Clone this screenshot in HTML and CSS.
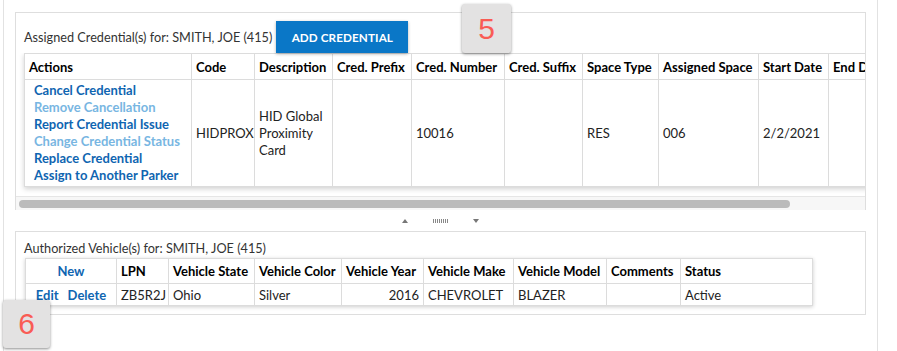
FILE: index.html
```html
<!DOCTYPE html>
<html>
<head>
<meta charset="utf-8">
<link rel="stylesheet" href="styles.css">
</head>
<body>
<div class="frame">
  <section class="panel panel-cred">
    <div class="panel-head">
      <span class="panel-title">Assigned Credential(s) for: SMITH, JOE (415)</span>
      <button class="btn-primary">ADD CREDENTIAL</button>
    </div>
    <div class="scroll-wrap">
      <div class="scroll-clip">
        <table class="grid grid-cred">
          <colgroup>
            <col class="c-actions"><col class="c-code"><col class="c-desc"><col class="c-prefix"><col class="c-number"><col class="c-suffix"><col class="c-stype"><col class="c-aspace"><col class="c-start"><col class="c-end">
          </colgroup>
          <thead>
            <tr>
              <th>Actions</th><th>Code</th><th>Description</th><th>Cred. Prefix</th><th>Cred. Number</th><th>Cred. Suffix</th><th>Space Type</th><th>Assigned Space</th><th>Start Date</th><th>End Date</th>
            </tr>
          </thead>
          <tbody>
            <tr>
              <td class="actions">
                <a class="lnk">Cancel Credential</a>
                <a class="lnk lnk-dim">Remove Cancellation</a>
                <a class="lnk">Report Credential Issue</a>
                <a class="lnk lnk-dim">Change Credential Status</a>
                <a class="lnk">Replace Credential</a>
                <a class="lnk">Assign to Another Parker</a>
              </td>
              <td>HIDPROX</td>
              <td>HID Global Proximity Card</td>
              <td></td>
              <td>10016</td>
              <td></td>
              <td>RES</td>
              <td>006</td>
              <td>2/2/2021</td>
              <td></td>
            </tr>
          </tbody>
        </table>
      </div>
      <div class="hscroll"><div class="hthumb"></div></div>
    </div>
  </section>

  <div class="splitter">
    <span class="tri-up"></span>
    <span class="grip"></span>
    <span class="tri-down"></span>
  </div>

  <section class="panel panel-veh">
    <div class="panel-title veh-title">Authorized Vehicle(s) for: SMITH, JOE (415)</div>
    <table class="grid grid-veh">
      <colgroup>
        <col class="v-act"><col class="v-lpn"><col class="v-state"><col class="v-color"><col class="v-year"><col class="v-make"><col class="v-model"><col class="v-comm"><col class="v-status">
      </colgroup>
      <thead>
        <tr>
          <th class="center"><a class="lnk">New</a></th><th>LPN</th><th>Vehicle State</th><th>Vehicle Color</th><th>Vehicle Year</th><th>Vehicle Make</th><th>Vehicle Model</th><th>Comments</th><th>Status</th>
        </tr>
      </thead>
      <tbody>
        <tr>
          <td class="center"><a class="lnk">Edit</a><a class="lnk gap">Delete</a></td>
          <td>ZB5R2J</td><td>Ohio</td><td>Silver</td><td class="num">2016</td><td>CHEVROLET</td><td>BLAZER</td><td></td><td>Active</td>
        </tr>
      </tbody>
    </table>
  </section>

  <div class="badge badge-5">5</div>
  <div class="badge badge-6">6</div>
</div>
</body>
</html>
```

FILE: styles.css
```css
html, body {
  margin: 0;
  padding: 0;
  background: #fff;
}
body {
  width: 897px;
  height: 351px;
  overflow: hidden;
  font-family: Lato, "Open Sans", sans-serif;
  font-size: 13px;
  color: #222;
}
.frame {
  position: relative;
  margin-left: 3px;
  width: 875px;
  height: 351px;
  box-sizing: border-box;
  border-left: 1px solid #e2e2e2;
  border-right: 1px solid #e2e2e2;
  padding: 12px 0 0 11px;
}
.panel {
  width: 851px;
  box-sizing: border-box;
  border: 1px solid #dedede;
  background: #fff;
}
.panel-cred {
  height: 198px;
  padding-top: 8px;
}
.panel-head {
  display: flex;
  align-items: center;
  padding-left: 8px;
  gap: 4px;
  height: 32px;
}
.panel-title {
  color: #333;
  font-size: 12.7px;
}
.btn-primary {
  height: 32px;
  width: 132px;
  border: none;
  background: #0a77c7;
  color: #fff;
  font-family: Lato, "Open Sans", sans-serif;
  font-weight: bold;
  font-size: 11.7px;
  letter-spacing: 0.1px;
  padding: 0;
  box-shadow: 0 1px 3px rgba(0,0,0,.3);
}
.scroll-wrap {
  width: 849px;
}
.scroll-clip {
  overflow: hidden;
  padding: 0 0 9px 8px;
}
.grid {
  border-collapse: collapse;
  table-layout: fixed;
  background: #fff;
}
.grid th, .grid td {
  border: 1px solid #dcdcdc;
  padding: 0 4px;
  text-align: left;
  white-space: nowrap;
  overflow: hidden;
}
.grid th {
  font-weight: bold;
  color: #000;
}
.grid-cred {
  width: 884px;
  box-shadow: 0 2px 5px rgba(0,0,0,.18);
}
.grid-cred thead th {
  height: 25px;
  line-height: 14px;
  border-top: 1px solid #dcdcdc;
}
.grid-cred tbody td {
  height: 106px;
  vertical-align: middle;
  white-space: normal;
  line-height: 17px;
  color: #222;
}
.grid-cred tbody td.actions {
  padding-left: 9px;
  white-space: nowrap;
}
.c-actions { width: 167px; }
.c-code { width: 63px; }
.c-desc { width: 78px; }
.c-prefix { width: 79px; }
.c-number { width: 93px; }
.c-suffix { width: 78px; }
.c-stype { width: 76px; }
.c-aspace { width: 100px; }
.c-start { width: 70px; }
.c-end { width: 80px; }

.lnk {
  display: block;
  font-weight: bold;
  color: #0f65b1;
  text-decoration: none;
}
.lnk-dim {
  color: #78b6e2;
}
.hscroll {
  height: 14px;
  border-top: 1px solid #e6e6e6;
  background: #f7f7f7;
  box-sizing: border-box;
  padding: 3px 0 0 3px;
}
.hthumb {
  width: 771px;
  height: 8px;
  border-radius: 4px;
  background: #bbbbbb;
}

.splitter {
  height: 21px;
  width: 851px;
  display: flex;
  align-items: center;
  justify-content: center;
  gap: 25px;
  box-sizing: border-box;
}
.tri-up {
  width: 0; height: 0;
  border-left: 3.5px solid transparent;
  border-right: 3.5px solid transparent;
  border-bottom: 4px solid #777;
}
.tri-down {
  width: 0; height: 0;
  border-left: 3.5px solid transparent;
  border-right: 3.5px solid transparent;
  border-top: 4px solid #777;
}
.grip {
  width: 15px;
  height: 4px;
  background: repeating-linear-gradient(90deg, #888 0 1px, transparent 1px 2px);
}

.panel-veh {
  height: 84px;
  padding: 8px 0 0 8px;
}
.veh-title {
  display: block;
  line-height: 17px;
  height: 18px;
}
.grid-veh {
  width: 787px;
  margin-left: 1px;
  box-shadow: 0 1px 4px rgba(0,0,0,.2);
}
.grid-veh thead th {
  height: 24px;
}
.grid-veh tbody td {
  height: 21px;
  color: #222;
}
.grid-veh .center { text-align: center; }
.grid-veh .num { text-align: right; }
.grid-veh .lnk { display: inline; }
.grid-veh .gap { margin-left: 9px; }
.v-act { width: 91px; }
.v-lpn { width: 52px; }
.v-state { width: 86px; }
.v-color { width: 87px; }
.v-year { width: 82px; }
.v-make { width: 90px; }
.v-model { width: 93px; }
.v-comm { width: 74px; }
.v-status { width: 132px; }

.badge {
  position: absolute;
  background: #e3e2e2;
  border-radius: 3px;
  box-shadow: 0 1px 3px rgba(0,0,0,.45);
  color: #f95c55;
  font-family: "Liberation Sans", Arial, sans-serif;
  font-size: 30px;
  display: flex;
  align-items: center;
  justify-content: center;
}
.badge-5 {
  left: 458px;
  top: 4px;
  width: 49px;
  height: 49px;
}
.badge-6 {
  left: -1px;
  top: 300px;
  width: 47px;
  height: 48px;
}
```
